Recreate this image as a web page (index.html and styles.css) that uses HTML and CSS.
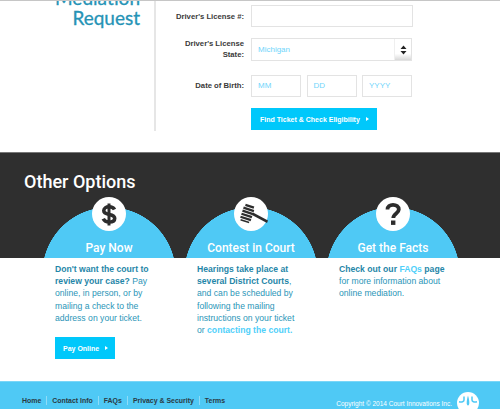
FILE: index.html
```html
<!DOCTYPE html>
<html lang="en">
<head>
<meta charset="utf-8">
<title>Mediation Request</title>
<link rel="stylesheet" href="styles.css">
</head>
<body>
<section class="request">
  <h1 class="request-title">Mediation<br>Request</h1>
  <form class="form">
    <div class="row row-license">
      <label class="label">Driver's License #:</label>
      <input class="input input-full" type="text">
    </div>
    <div class="row row-state">
      <label class="label">Driver's License<br>State:</label>
      <div class="select">
        <span class="select-value">Michigan</span>
        <span class="select-arrows">
          <svg width="7" height="10" viewBox="0 0 7 10"><path d="M3.500 0.500 6.500 4H0.500ZM3.500 9.500 0.500 6H6.500Z" fill="#222"/></svg>
        </span>
      </div>
    </div>
    <div class="row row-birth">
      <label class="label">Date of Birth:</label>
      <div class="date">
        <span class="date-field">MM</span>
        <span class="date-field">DD</span>
        <span class="date-field">YYYY</span>
      </div>
    </div>
    <div class="row">
      <span class="label"></span>
      <a class="button button-wide">Find Ticket &amp; Check Eligibility<i class="caret"></i></a>
    </div>
  </form>
</section>

<section class="options">
  <h2 class="options-title">Other Options</h2>
  <div class="caps">
    <div class="cap">
      <span class="cap-icon">
        <svg width="34" height="34" viewBox="0 0 34 34"><path d="M22.500 12.500C21.500 10.500 19.500 9.800 17 9.800C14 9.800 11.800 11.300 11.800 13.700C11.800 19 22.700 15.800 22.700 21.200C22.700 23.700 20.300 25 17.200 25C14.500 25 12.300 24 11.200 21.800" fill="none" stroke="#2d2d2d" stroke-width="3.600"/><path d="M17 6.500V28.500" stroke="#2d2d2d" stroke-width="3"/></svg>
      </span>
      <span class="cap-title">Pay Now</span>
    </div>
    <div class="cap">
      <span class="cap-icon">
        <svg width="34" height="34" viewBox="0 0 34 34"><g fill="#2d2d2d" transform="rotate(18 13.500 16)"><rect x="9" y="7.800" width="9" height="2.300"/><rect x="8" y="11" width="11" height="2.300"/><rect x="8" y="14.200" width="11" height="2.300"/><rect x="8" y="17.400" width="11" height="2.300"/><rect x="8" y="20.600" width="11" height="2.300"/><rect x="9" y="23.800" width="9" height="1.600"/></g><path d="M19 15.500 34 23.500 33 26 18 18Z" fill="#2d2d2d"/></svg>
      </span>
      <span class="cap-title">Contest in Court</span>
    </div>
    <div class="cap">
      <span class="cap-icon">
        <svg width="34" height="34" viewBox="0 0 34 34"><path d="M11.500 12.500C11.500 9.500 14 7.800 17 7.800C20.200 7.800 22.800 9.600 22.800 12.500C22.800 16.500 17.300 16.500 17.300 21" fill="none" stroke="#2d2d2d" stroke-width="3.800"/><rect x="15" y="23.500" width="4.400" height="4.400" fill="#2d2d2d"/></svg>
      </span>
      <span class="cap-title">Get the Facts</span>
    </div>
  </div>
</section>

<section class="details">
  <div class="detail">
    <p><strong>Don't want the court to review your case?</strong> Pay online, in person, or by mailing a check to the address on your ticket.</p>
    <a class="button button-pay">Pay Online<i class="caret"></i></a>
  </div>
  <div class="detail">
    <p><strong>Hearings take place at several District Courts</strong>, and can be scheduled by following the mailing instructions on your ticket<br>or <a class="link">contacting the court.</a></p>
  </div>
  <div class="detail">
    <p><strong>Check out our <a class="link">FAQs</a> page</strong> for more information about online mediation.</p>
  </div>
</section>

<footer class="footer">
  <nav class="footer-nav">
    <a>Home</a><a>Contact Info</a><a>FAQs</a><a>Privacy &amp; Security</a><a>Terms</a>
  </nav>
  <div class="footer-right">
    <span class="copyright">Copyright © 2014 Court Innovations Inc.</span>
    <svg class="logo" width="22" height="22" viewBox="0 0 22 22">
      <circle cx="11" cy="11" r="11" fill="#fff"/>
      <path d="M11 3.500C12 6.500 12.300 9 12.300 11C12.300 12.500 11.800 13.500 11 13.500C10.200 13.500 9.700 12.500 9.700 11C9.700 9 10 6.500 11 3.500Z" fill="#4fc9f5"/>
      <path d="M7 4.500V8C7 9.500 5 10.500 2 9.800M15 4.500V8C15 9.500 17 10.500 20 9.800" fill="none" stroke="#4fc9f5" stroke-width="1.500"/>
    </svg>
  </div>
</footer>
</body>
</html>
```
FILE: styles.css
```css
* { box-sizing: border-box; }
html, body { margin: 0; padding: 0; height: 409px; overflow: hidden; background: #fff; }
body { font-family: "Liberation Sans", Arial, sans-serif; color: #333; }

.request {
  height: 152px;
  border-top: 1px solid #c6c6c6;
  display: flex;
  overflow: hidden;
}
.request-title {
  flex: none;
  width: 156px;
  height: 130px;
  margin: 0;
  padding: 0 14px 0 0;
  border-right: 2px solid #e6e6e6;
  text-align: right;
  font-family: Lato, sans-serif;
  font-weight: 400;
  font-size: 19px;
  line-height: 20px;
  color: #2593b6;
  -webkit-text-stroke: 0.3px #2593b6;
  overflow: hidden;
}
.request-title::before { content: ""; display: block; margin-top: -13.500px; }
.form { padding: 4px 0 0 0; }
.row { display: flex; gap: 7px; }
.row-license { height: 33px; }
.row-state { height: 37px; }
.row-birth { height: 33px; }
.label {
  width: 88px;
  text-align: right;
  font-size: 7.700px;
  font-weight: 700;
  line-height: 11px;
  color: #3a3a3a;
}
.row-license .label { padding-top: 6px; }
.row-state .label { padding-top: 0; }
.row-birth .label { padding-top: 5px; }
.input {
  display: block;
  height: 22px;
  padding: 0;
  border: 1px solid #e3e3e3;
  background: #fff;
}
.input-full { width: 162px; }
.select {
  width: 161px;
  height: 23px;
  border: 1px solid #e3e3e3;
  display: flex;
  align-items: center;
  justify-content: space-between;
}
.select-value { padding-left: 6px; font-size: 8px; color: #6fd5fb; }
.select-arrows {
  width: 17px;
  height: 100%;
  display: flex;
  align-items: center;
  justify-content: center;
  background: linear-gradient(#fff 70%, #d8d8d8);
  border-left: 1px solid #efefef;
}
.date { display: flex; gap: 5.500px; height: 22px; }
.date-field {
  width: 50px;
  height: 22px;
  padding-left: 6px;
  border: 1px solid #e3e3e3;
  font-size: 8px;
  line-height: 20px;
  color: #6fd5fb;
}
.button {
  display: flex;
  align-items: center;
  height: 22px;
  background: #00c8fb;
  color: #fff;
  font-size: 7px;
  font-weight: 700;
}
.button-wide { width: 126px; padding-left: 9px; }
.button-pay { width: 60px; padding-left: 8px; margin-top: 13px; }
.caret {
  margin-left: 6px;
  border-left: 3px solid #fff;
  border-top: 2px solid transparent;
  border-bottom: 2px solid transparent;
}

.options {
  height: 106px;
  background: #2f2f2f;
  padding-top: 17px;
  border-top: 1px solid #777;
}
.options-title {
  margin: 0 0 0 24px;
  font-family: Roboto, sans-serif;
  font-weight: 500;
  font-size: 18px;
  line-height: 24px;
  color: #fff;
}
.caps {
  display: grid;
  grid-template-columns: repeat(3, 130px);
  column-gap: 12px;
  margin: 3px 0 0 44px;
}
.cap {
  height: 61px;
  display: flex;
  flex-direction: column;
  align-items: center;
  background: radial-gradient(circle 67px at 50% 77px, #4fc9f5 66.500px, transparent 67px);
}
.cap-icon {
  width: 34px;
  height: 34px;
  border-radius: 50%;
  background: #fff;
  display: block;
}
.cap-icon svg { display: block; }
.cap-title {
  margin-top: 9px;
  font-family: Roboto, sans-serif;
  font-weight: 500;
  font-size: 12px;
  line-height: 16px;
  color: #fff;
}

.details {
  height: 123px;
  display: grid;
  grid-template-columns: repeat(3, 108px);
  column-gap: 34px;
  padding: 5px 0 0 55px;
}
.detail p {
  margin: 0;
  font-size: 8.650px;
  line-height: 12.200px;
  color: #2b96b8;
}
.detail strong { color: #1f86a8; }
.link { color: #4fd0fa; font-weight: 700; }

.footer {
  height: 28px;
  background: #4fc9f5;
  border-top: 1px solid #7ad6f7;
  display: flex;
  justify-content: space-between;
  padding-left: 22px;
}
.footer-nav {
  display: flex;
  align-self: flex-start;
  margin-top: 14px;
  font-size: 6.950px;
  font-weight: 700;
  line-height: 9px;
  color: #2a3a44;
}
.footer-nav a { padding: 0 5px; border-left: 1px solid #8fdcf8; }
.footer-nav a:first-child { padding-left: 0; border-left: 0; }
.footer-right {
  display: flex;
  align-items: flex-start;
  gap: 5px;
  padding-right: 21px;
}
.copyright { margin-top: 18px; font-size: 6.500px; line-height: 8px; color: #fff; }
.logo { margin-top: 10px; flex: none; }
```
